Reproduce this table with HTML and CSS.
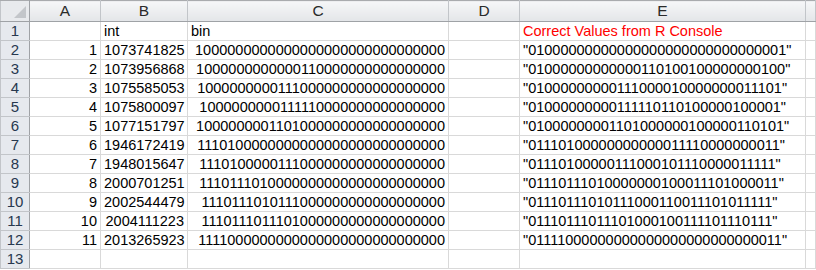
FILE: index.html
```html
<!DOCTYPE html>
<html lang="en">
<head>
	<title>Sheet1</title>
	<link rel="stylesheet" href="styles.css">
</head>
<body>

<table class="sheet">
	<colgroup>
		<col class="w-hdr">
		<col class="w-a">
		<col class="w-b">
		<col class="w-c">
		<col class="w-d">
		<col class="w-e">
		<col>
	</colgroup>
	<tr class="colhead">
		<th class="corner"><span class="tri"></span></th>
		<th>A</th><th>B</th><th>C</th><th>D</th><th>E</th><th></th>
	</tr>
	<tr>
		<th class="rowhead">1</th>
		<td></td><td>int</td><td>bin</td><td></td><td class="note">Correct Values from R Console</td><td></td>
	</tr>
	<tr>
		<th class="rowhead">2</th>
		<td class="num">1</td><td class="num">1073741825</td><td class="num">1000000000000000000000000000000</td><td></td><td>"01000000000000000000000000000001"</td><td></td>
	</tr>
	<tr>
		<th class="rowhead">3</th>
		<td class="num">2</td><td class="num">1073956868</td><td class="num">1000000000000110000000000000000</td><td></td><td>"01000000000000110100100000000100"</td><td></td>
	</tr>
	<tr>
		<th class="rowhead">4</th>
		<td class="num">3</td><td class="num">1075585053</td><td class="num">1000000000111000000000000000000</td><td></td><td>"01000000000111000010000000011101"</td><td></td>
	</tr>
	<tr>
		<th class="rowhead">5</th>
		<td class="num">4</td><td class="num">1075800097</td><td class="num">1000000000111110000000000000000</td><td></td><td>"01000000000111110110100000100001"</td><td></td>
	</tr>
	<tr>
		<th class="rowhead">6</th>
		<td class="num">5</td><td class="num">1077151797</td><td class="num">1000000001101000000000000000000</td><td></td><td>"01000000001101000000100000110101"</td><td></td>
	</tr>
	<tr>
		<th class="rowhead">7</th>
		<td class="num">6</td><td class="num">1946172419</td><td class="num">1110100000000000000000000000000</td><td></td><td>"01110100000000000011110000000011"</td><td></td>
	</tr>
	<tr>
		<th class="rowhead">8</th>
		<td class="num">7</td><td class="num">1948015647</td><td class="num">1110100000111000000000000000000</td><td></td><td>"01110100000111000101110000011111"</td><td></td>
	</tr>
	<tr>
		<th class="rowhead">9</th>
		<td class="num">8</td><td class="num">2000701251</td><td class="num">1110111010000000000000000000000</td><td></td><td>"01110111010000000100011101000011"</td><td></td>
	</tr>
	<tr>
		<th class="rowhead">10</th>
		<td class="num">9</td><td class="num">2002544479</td><td class="num">1110111010111000000000000000000</td><td></td><td>"01110111010111000110011101011111"</td><td></td>
	</tr>
	<tr>
		<th class="rowhead">11</th>
		<td class="num">10</td><td class="num">2004111223</td><td class="num">1110111011101000000000000000000</td><td></td><td>"01110111011101000100111101110111"</td><td></td>
	</tr>
	<tr>
		<th class="rowhead">12</th>
		<td class="num">11</td><td class="num">2013265923</td><td class="num">1111000000000000000000000000000</td><td></td><td>"01111000000000000000000000000011"</td><td></td>
	</tr>
	<tr>
		<th class="rowhead">13</th>
		<td></td><td></td><td></td><td></td><td></td><td></td>
	</tr>
</table>

</body>
</html>
```

FILE: styles.css
```css
body {
	margin: 0;
	background: #fff;
	font-family: "Liberation Sans", Arial, sans-serif;
	font-size: 14.5px;
	color: #000;
}

.sheet {
	width: 816px;
	table-layout: fixed;
	border-collapse: collapse;
}

.w-hdr { width: 29px; }
.w-a { width: 71px; }
.w-b { width: 87px; }
.w-c { width: 261px; }
.w-d { width: 71px; }
.w-e { width: 286px; }

.sheet td,
.sheet th {
	height: 18px;
	padding: 0 3px;
	border: 1px solid #d9d9d9;
	white-space: nowrap;
	overflow: hidden;
	line-height: 18px;
}

.sheet td {
	text-align: left;
}

.sheet td.num {
	text-align: right;
}

.sheet td.note {
	color: #ff0000;
}

/* column letters */
.colhead th {
	height: 20px;
	font-weight: normal;
	font-size: 15.5px;
	color: #2a2a2a;
	text-align: center;
	background: linear-gradient(#f6f7f8, #e3e5e8);
	border: 1px solid #c2c5c9;
	border-top-color: #a9abae;
	border-bottom-color: #9fa2a6;
}

/* row numbers */
.sheet th.rowhead {
	font-weight: normal;
	font-size: 15px;
	color: #27384f;
	text-align: center;
	padding: 0;
	background: #e6e9ee;
	border: 1px solid #c2c5c9;
	border-right-color: #9fa2a6;
}

.sheet th.corner {
	position: relative;
	padding: 0;
	background: #e8eaed;
	border-right-color: #9fa2a6;
}

.tri {
	position: absolute;
	right: 3px;
	bottom: 3px;
	width: 0;
	height: 0;
	border-left: 12px solid transparent;
	border-bottom: 12px solid #c3c6ca;
}
```
